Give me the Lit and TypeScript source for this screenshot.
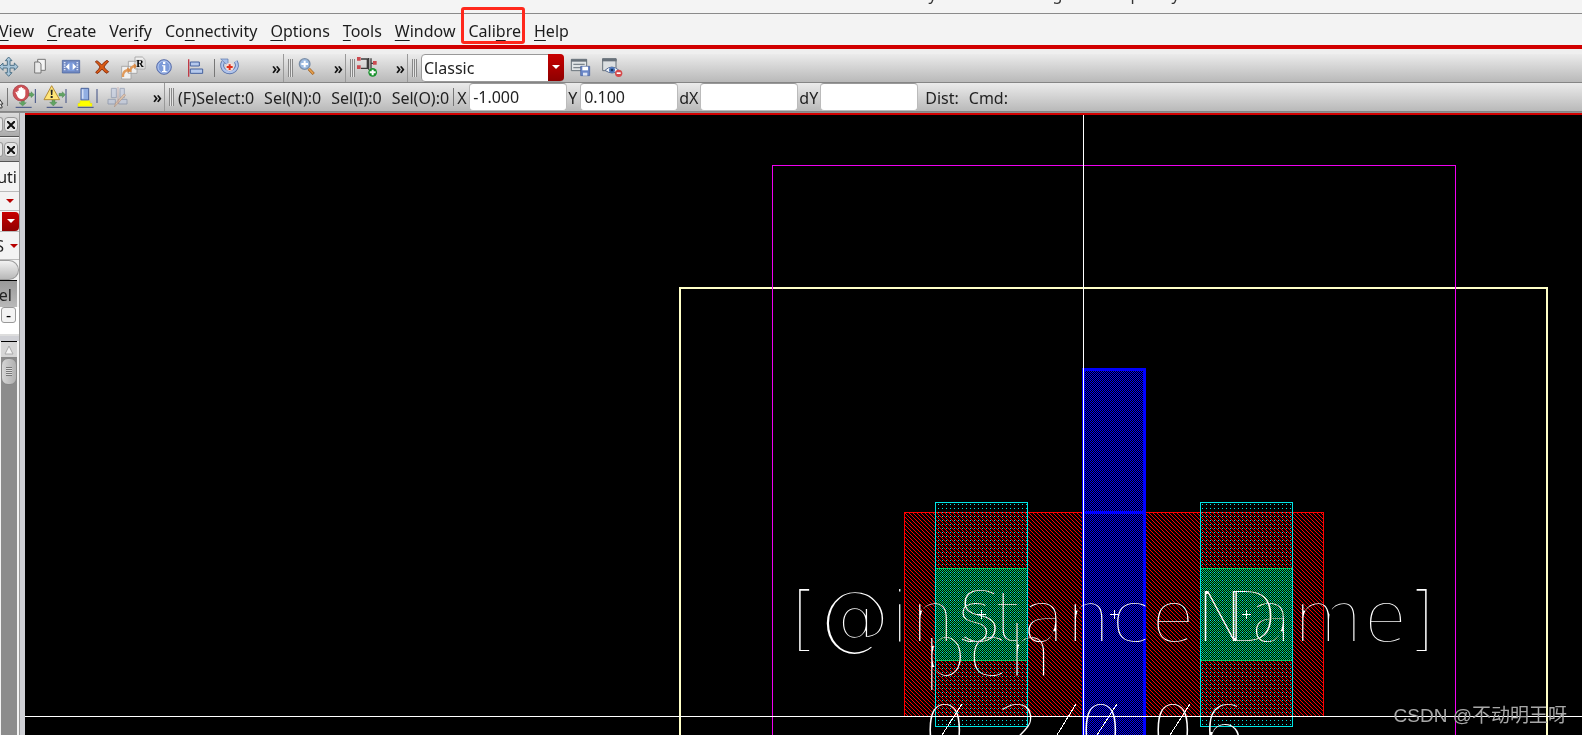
import { LitElement, html, svg, css } from 'lit';
import { customElement, property, state } from 'lit/decorators.js';

type Glyph = { name: string; box: string; art: unknown };

const icons: Record<string, Glyph> = {
  move: {
    name: 'Move', box: '-9 162 72 84',
    art: svg`<path d="M26 171l10 11h-6v14h13v-7l11 11-11 11v-7H30v14h6l-10 11-10-11h6v-14H9v7l-11-11 11-11v7h13v-14h-6z" fill="#a9c6da" stroke="#4f7288" stroke-width="3"/>`,
  },
  copy: {
    name: 'Copy', box: '84 162 72 84',
    art: svg`<path d="M113 178h23v33h-23z" fill="#f4f4f4" stroke="#777" stroke-width="3"/><path d="M104 186h14l5 6v27h-19z" fill="#e9e9e9" stroke="#777" stroke-width="3"/>`,
  },
  stretch: {
    name: 'Stretch', box: '177 162 72 84',
    art: svg`<path d="M187 181h52v38h-52z" fill="#7189c2" stroke="#425d9a" stroke-width="2"/><path d="M194 186v28M232 186v28" stroke="#dbe5f8" stroke-width="5" stroke-dasharray="4 3"/><path d="M202 187h22v26h-22z" fill="#7c9bdb"/><path d="M208 190v20l-11-10zM218 190v20l11-10z" fill="#fff"/>`,
  },
  remove: {
    name: 'Delete', box: '268 162 72 84',
    art: svg`<path d="M288 182q8 4 15 13 8-10 16-14l5 4q-9 7-14 16 5 9 14 14l-5 5q-9-4-15-13-6 9-15 14l-4-5q9-6 13-15-5-9-14-15z" fill="#d95a13" stroke="#7d2306" stroke-width="2.5"/>`,
  },
  replace: {
    name: 'Repeat copy', box: '362 162 72 84',
    art: svg`<path d="M364 199h28v38h-28zM384 184h26v36h-26zM404 171h22l8 8v28h-30z" fill="#f0f0f0" stroke="#a0a0a0" stroke-width="2.5"/><path d="M368 231v-7q3-13 17-14M390 216v-6q3-12 16-12" fill="none" stroke="#e09a5b" stroke-width="7"/><path d="M380 202l12 8-10 9zM400 190l11 8-9 9z" fill="#d98944"/><path d="M408 178h24v26h-24z" fill="#ddd"/><text x="408" y="202" font-size="31" font-weight="700" font-family="Liberation Serif, serif">R</text>`,
  },
  info: {
    name: 'Properties', box: '456 162 72 84',
    art: svg`<circle cx="492" cy="201" r="22" fill="#7d9bd9" stroke="#5c6fa9" stroke-width="3"/><circle cx="492" cy="201" r="18" fill="none" stroke="#b3c7ef" stroke-width="3"/><path d="M489 185h7v7h-7zM486 196h10v17h4v3h-14v-3h4v-14h-4z" fill="#fff"/>`,
  },
  align: {
    name: 'Align', box: '549 162 72 84',
    art: svg`<path d="M566 178v52" stroke="#c13b46" stroke-width="4"/><path d="M571 186h27v12h-27zM571 207h37v13h-37z" fill="#b5c9ed" stroke="#44609d" stroke-width="3"/>`,
  },
  rotate: {
    name: 'Rotate', box: '664 162 72 84',
    art: svg`<path d="M667 186a22 21 0 1 0 38-2" fill="none" stroke="#5872aa" stroke-width="12"/><path d="M667 186a22 21 0 1 0 38-2" fill="none" stroke="#b1c5ec" stroke-width="7"/><path d="M660 177h22v20z" fill="#a9c0eb" stroke="#5872aa" stroke-width="2"/><circle cx="687" cy="201" r="12" fill="#f5dedb"/><path d="M684 193h6v5h6v6h-6v6h-6v-6h-6v-6h6z" fill="#df301c"/>`,
  },
  zoom: {
    name: 'Zoom in', box: '-21 162 72 84',
    art: svg`<path d="M26 206l15 16" stroke="#9a5b1d" stroke-width="9"/><path d="M26 206l14 15" stroke="#e6a04e" stroke-width="5"/><circle cx="14" cy="192" r="16" fill="#9dbce2" stroke="#7b8fa8" stroke-width="4"/><path d="M11 182h6v7h7v6h-7v7h-6v-7H4v-6h7z" fill="#fff"/>`,
  },
  device: {
    name: 'Add device', box: '168 162 72 84',
    art: svg`<path d="M186 177h19v28h-19M209 174v35M216 175v31M216 190h14M205 190h5" fill="none" stroke="#3c3c3c" stroke-width="4"/><path d="M174 171h11v11h-11zM174 196h11v11h-11zM222 183h11v11h-11z" fill="#cc4a50"/><circle cx="221" cy="217" r="13" fill="#17912b"/><path d="M218 209h6v5h6v6h-6v6h-6v-6h-6v-6h6z" fill="#fff"/>`,
  },
  saveView: {
    name: 'Save workspace', box: '804 162 72 84',
    art: svg`<path d="M814 178h46v34h-46z" fill="#e1e4e6" stroke="#68717a" stroke-width="3"/><path d="M813 178h48v7h-48z" fill="#68717a"/><path d="M820 193h34M820 203h24" stroke="#7c858c" stroke-width="4"/><path d="M842 199h27v28h-27z" fill="#6a87c8" stroke="#405b98" stroke-width="2"/><path d="M847 200h17v11h-17z" fill="#fff"/><path d="M849 218h13v9h-13z" fill="#dce4f4"/>`,
  },
  hideView: {
    name: 'Hide workspace', box: '897 162 72 84',
    art: svg`<path d="M908 176h40v36h-40z" fill="#dcdfe1" stroke="#68717a" stroke-width="3"/><path d="M906 176h44v8h-44z" fill="#68717a"/><path d="M915 211q20-20 42 0-20 16-42 0z" fill="#f2f5fa" stroke="#5c6f92" stroke-width="3"/><circle cx="936" cy="210" r="9" fill="#4c77bd"/><circle cx="936" cy="210" r="4" fill="#17355f"/><circle cx="956" cy="220" r="11" fill="#d4494b"/><path d="M950 217h12v5h-12z" fill="#fff"/>`,
  },
  stop: {
    name: 'Stop at level', box: '34 252 78 84',
    art: svg`<path d="M48 325h48" stroke="#3d4d82" stroke-width="3"/><path d="M107 270v42" stroke="#3d4d82" stroke-width="3"/><path d="M86 283h8v-5l10 9-10 9v-5h-8zM65 304h9v7h6l-11 10-11-10h7z" fill="#61a463" stroke="#3b7742"/><circle cx="64" cy="282" r="24" fill="#cc5055" stroke="#a23c45" stroke-width="2"/><path d="M53 276q3-2 4 0v-8q3-3 5 0v-3q3-2 5 0v3q3-2 5 0v4q3-2 5 0v16q-2 12-12 12-9 0-14-13l-4-8q3-2 6 3z" fill="#fff"/>`,
  },
  warn: {
    name: 'Warn at level', box: '127 252 78 84',
    art: svg`<path d="M141 325h48M199 270v42" stroke="#3d4d82" stroke-width="3"/><path d="M178 283h10v-5l9 9-9 9v-5h-10zM157 300h9v10h6l-11 11-11-11h7z" fill="#61a463" stroke="#3b7742"/><path d="M156 260l24 42h-47z" fill="#ffe577" stroke="#b58b32" stroke-width="3" stroke-linejoin="round"/><path d="M153 272h6l-1 16h-4zM153 291h6v6h-6z" fill="#222"/>`,
  },
  marker: {
    name: 'Highlight', box: '220 252 78 84',
    art: svg`<path d="M234 325h48M292 270v42" stroke="#3d4d82" stroke-width="3"/><path d="M244 268h23v35h-23z" fill="#91aee2" stroke="#4b639b" stroke-width="3"/><path d="M249 271v28" stroke="#d2def6" stroke-width="5"/><path d="M241 305h30v8h6v9h-42v-9h6z" fill="#ff0" stroke="#d8d000"/>`,
  },
  edit: {
    name: 'Edit in place', box: '313 252 78 84',
    art: svg`<g opacity=".55"><path d="M335 268h15v28h-15zM361 268h13v28h-13zM325 301h22v14h-22zM357 301h25v14h-25z" fill="#bfcae3" stroke="#71809f" stroke-width="3"/><path d="M378 288l-25 27-9 9 4-12 25-27z" fill="#e8bd90" stroke="#9c6a55" stroke-width="2"/><path d="M355 264v50" stroke="#a66" stroke-width="2"/></g>`,
  },
  pointer: {
    name: 'Select', box: '0 252 12 84',
    art: svg`<path d="M-12 286v38l8-6 6 10 5-3-5-10h7z" fill="#eee" stroke="#333" stroke-width="3"/>`,
  },
};

@customElement('tool-button')
class ToolButton extends LitElement {
  @property() icon = 'move';

  static styles = css`
    :host { display: flex; flex: none; }
    button { display: flex; padding: 0; border: 0; background: none; }
    svg { display: block; height: 28px; overflow: visible; }
  `;

  render() {
    const g = icons[this.icon];
    return html`<button aria-label=${g.name}><svg viewBox=${g.box} aria-hidden="true">${g.art}</svg></button>`;
  }
}

@customElement('menu-bar')
class MenuBar extends LitElement {
  private items: [string, number][] = [
    ['View', 0], ['Create', 0], ['Verify', 3], ['Connectivity', 2], ['Options', 0],
    ['Tools', 0], ['Window', 0], ['Calibre', 4], ['Help', 0],
  ];

  static styles = css`
    nav { display: flex; gap: 13px; height: 31px; margin-left: -1px; background: #f3f3f3; }
    button {
      position: relative; padding: 0; border: 0; background: none; color: #1c1c1c;
      font: 16px/34px "Noto Sans", sans-serif;
    }
    u { text-underline-offset: 3px; text-decoration-thickness: 1px; text-decoration-skip-ink: none; }
    .marked::after {
      content: ""; position: absolute; inset: -7px -4px 1px -7px; border: 3px solid #ff281c; border-radius: 3px;
    }
  `;

  render() {
    return html`<nav>${this.items.map(([label, k]) => html`<button
      class=${label === 'Calibre' ? 'marked' : ''}>${label.slice(0, k)}<u>${label[k]}</u>${label.slice(k + 1)}</button>`)}</nav>`;
  }
}

@customElement('tool-rows')
class ToolRows extends LitElement {
  @state() private x = '-1.000';
  @state() private y = '0.100';

  static styles = css`
    :host { display: block; font: 16px/31px "Noto Sans", sans-serif; color: #222; border-bottom: 1px solid #8e8e8e; }
    .row {
      display: flex; height: 28px; overflow: hidden;
      background: linear-gradient(#ebebeb, #b9b9b9); border-bottom: 1px solid #858585;
    }
    .group { display: flex; flex: none; box-sizing: border-box; border-right: 1px solid #999; }
    .set { display: flex; gap: 7px; }
    .edit { width: 284px; }
    .edit .set { margin-left: -3px; }
    .view, .create { width: 62px; }
    .level { width: 165px; gap: 3px; }
    .level .set { gap: 5px; }
    .fill { flex: 1; border: 0; gap: 4px; }
    .sep { width: 1px; height: 18px; align-self: center; background: #777; flex: none; }
    .more { padding: 0; border: 0; background: none; font: 600 16px/26px "Noto Sans", sans-serif; color: #111; margin-left: auto; margin-right: 2px; }
    .grip { width: 5px; height: 18px; margin-left: 4px; align-self: center; flex: none;
      background: repeating-linear-gradient(90deg, #888 0 1px, #e4e4e4 1px 2px); }
    .combo { position: relative; display: flex; width: 143px; height: 28px; flex: none; }
    select {
      appearance: none; width: 100%; padding: 0 20px 0 2px; border: 1px solid #999; border-radius: 4px;
      background: #fff; color: #222; font: 16px/26px "Noto Sans", sans-serif;
    }
    .drop { position: absolute; right: 0; top: 0; width: 16px; height: 27px; border-radius: 0 4px 4px 0; background: linear-gradient(#c90000, #8d0000); pointer-events: none; }
    .drop::after { content: ""; position: absolute; left: 4px; top: 11px; border: 4px solid transparent; border-top-color: #fff; }
    .status { display: flex; gap: 10px; }
    .coords { display: flex; gap: 1px; }
    .coords .sep { margin-right: 2px; }
    label { display: flex; gap: 2px; line-height: 30px; }
    label input {
      width: 98px; height: 28px; box-sizing: border-box; padding: 0 3px; border: 1px solid #bbb; border-top-color: #999;
      border-radius: 4px; font: 16px/26px "Noto Sans", sans-serif; color: #222; background: #fff;
    }
    label span { min-width: 10px; }
    .tail { display: flex; gap: 10px; padding-left: 3px; }
  `;

  render() {
    const tools = (names: string[]) => names.map((n) => html`<tool-button icon=${n}></tool-button>`);
    const more = html`<button class="more" aria-label="More tools">»</button>`;
    return html`
      <div class="row">
        <div class="group edit">
          <div class="set">${tools(['move', 'copy', 'stretch', 'remove', 'replace', 'info', 'align'])}<span class="sep"></span>${tools(['rotate'])}</div>
          ${more}
        </div>
        <div class="group view"><span class="grip"></span>${tools(['zoom'])}${more}</div>
        <div class="group create"><span class="grip"></span>${tools(['device'])}${more}</div>
        <div class="group fill"><span class="grip"></span>
          <div class="combo"><select aria-label="Workspace"><option>Classic</option></select><span class="drop"></span></div>
          <div class="set">${tools(['saveView', 'hideView'])}</div>
        </div>
      </div>
      <div class="row">
        <div class="group level">${tools(['pointer'])}<span class="sep"></span>
          <div class="set">${tools(['stop', 'warn', 'marker', 'edit'])}</div>${more}</div>
        <div class="group fill"><span class="grip"></span>
          <div class="status"><span>(F)Select:0</span><span>Sel(N):0</span><span>Sel(I):0</span><span>Sel(O):0</span></div>
          <div class="coords">
            <span class="sep"></span>
            <label><span>X</span><input .value=${this.x} /></label>
            <label><span>Y</span><input .value=${this.y} /></label>
            <label><span>dX</span><input /></label>
            <label><span>dY</span><input /></label>
          </div>
          <div class="tail"><span>Dist:</span><span>Cmd:</span></div>
        </div>
      </div>`;
  }
}

@customElement('side-dock')
class SideDock extends LitElement {
  static styles = css`
    :host { display: flex; width: 25px; flex: none; background: #cfd0d5; font: 16px/28px "Noto Sans", sans-serif; color: #222; }
    .pane { display: flex; flex-direction: column; width: 19px; overflow: hidden; background: #f3f3f3; }
    .edge { flex: 1; border-left: 1px solid #999; }
    .title { display: flex; justify-content: flex-end; height: 24px; flex: none; box-sizing: border-box; padding: 4px 1px 3px 0;
      background: linear-gradient(#dcdcdc, #aaa); border-bottom: 1px solid #555; margin-bottom: 1px; }
    .close { width: 14px; height: 15px; flex: none; padding: 0; border: 1px solid #999; border-radius: 4px; background: #e6e6e6;
      display: grid; place-items: center; }
    .close svg { width: 8px; height: 8px; }
    .stub { width: 4px; height: 13px; margin-right: 1px; border: 1px solid #999; border-left: 0; border-radius: 0 4px 4px 0; background: #e6e6e6; }
    .line { flex: none; display: flex; justify-content: flex-end; align-items: center; box-sizing: border-box; border-bottom: 1px solid #bbb; overflow: hidden; }
    .text { height: 29px; padding-right: 2px; line-height: 30px; }
    .drop { height: 19px; }
    .key { height: 21px; }
    .layer { height: 28px; }
    .caret { width: 0; border: 4px solid transparent; border-top-color: #b80000; border-bottom: 0; margin-right: 5px; flex: none; }
    .layer .caret { margin-left: 6px; margin-right: 1px; }
    .red { width: 17px; height: 19px; border-radius: 0 4px 4px 0; background: linear-gradient(#c80000, #900000); display: grid; place-items: center; }
    .red .caret { border-top-color: #fff; margin: 0; }
    .round { height: 20px; flex: none; border: 1px solid #999; border-left: 0; border-radius: 0 10px 10px 0; background: linear-gradient(#f2f2f2, #b8b8b8); box-sizing: border-box; padding: 0; }
    .head { display: flex; justify-content: flex-end; height: 26px; flex: none; border-top: 1px solid #000; background: linear-gradient(#999, #b9b9b9); padding-right: 5px; line-height: 28px; margin-right: 2px; }
    .body { height: 27px; flex: none; background: #fff; border-bottom: 2px solid #ddd; display: flex; align-items: flex-start; }
    .minus { margin-left: 1px; width: 15px; height: 16px; padding: 0; border: 1px solid #999; border-radius: 3px; background: #f3f3f3; font: 16px/12px "Noto Sans", sans-serif; }
    .split { height: 5px; flex: none; background: #cfd0d5; }
    .scroll { flex: 1; margin: 0 2px 0 1px; border-top: 1px solid #000; background: #8c8c8c; }
    .up { display: grid; place-items: center; height: 15px; background: #d6d6d6; border-bottom: 1px solid #888; }
    .up svg { width: 10px; height: 10px; }
    .thumb { height: 27px; box-sizing: border-box; border: 1px solid #888; border-radius: 7px; background: linear-gradient(90deg, #d5d5d5, #b0b0b0); display: grid; place-items: center; }
    .thumb i { width: 6px; height: 9px; background: repeating-linear-gradient(#777 0 1px, #ddd 1px 2px); }
  `;

  render() {
    const title = html`<div class="title"><span class="stub"></span><button class="close" aria-label="Close">
      <svg viewBox="0 0 8 8"><path d="M0 0l8 8M8 0L0 8" stroke="#111" stroke-width="2"/></svg></button></div>`;
    return html`
      <div class="pane">
        ${title}${title}
        <div class="line text">uti</div>
        <div class="line drop"><span class="caret"></span></div>
        <div class="line key"><span class="red"><span class="caret"></span></span></div>
        <div class="line layer">S<span class="caret"></span></div>
        <button class="round" aria-label="Options"></button>
        <div class="head">el</div>
        <div class="body"><button class="minus">-</button></div>
        <div class="split"></div>
        <div class="scroll">
          <div class="up"><svg viewBox="0 0 10 10"><path d="M5 1l4 8H1z" fill="#f5f5f5" stroke="#aaa"/></svg></div>
          <div class="thumb"><i></i></div>
        </div>
      </div>
      <div class="edge"></div>`;
  }
}

@customElement('layout-canvas')
class LayoutCanvas extends LitElement {
  static styles = css`
    :host { display: block; position: relative; flex: 1; min-width: 0; overflow: hidden; background: #000; border-top: 2px solid #d10000; }
    svg { position: absolute; inset: 0; width: 100%; height: 100%; shape-rendering: crispEdges; }
    .label { font: 200 72px "DejaVu Sans", sans-serif; fill: #fff; stroke: #000; stroke-width: 2px; mix-blend-mode: lighten; }
    .credit { position: absolute; right: 15px; bottom: 5px; font: 19px/28px "Liberation Sans", "Noto Sans CJK SC", sans-serif; color: #a8a8a8; }
  `;

  private labels: [number, number, string][] = [
    [790, 642, '[@instanceName]'], [957, 642, 'S'], [1223, 642, 'D'], [922, 676, 'pch'],
    [922, 756, '0.'], [996, 756, '2'], [1078, 756, '0.'], [1150, 756, '0'], [1201, 756, '6'],
  ];

  private contact(x: number) {
    return svg`
      <rect x=${x} y="502" width="93" height="225" fill="url(#dots)"/>
      <rect x=${x} y="568" width="93" height="93" fill="#000"/>
      <rect x=${x} y="568" width="93" height="93" fill="url(#mesh)"/>
      <path d="M${x} 568.5h93M${x} 660.5h93" stroke="#00d070"/>
      <rect x=${x + 0.5} y="502.5" width="92" height="224" fill="none" stroke="#00e5e5"/>`;
  }

  render() {
    return html`
      <svg role="img" aria-label="Transistor layout">
        <defs>
          <pattern id="hatch" width="4" height="4" patternUnits="userSpaceOnUse">
            <path d="M0 0h1v1H0zM1 1h1v1H1zM2 2h1v1H2zM3 3h1v1H3z" fill="#f00"/>
          </pattern>
          <pattern id="dots" width="4" height="4" patternUnits="userSpaceOnUse">
            <path d="M2 0h1v1H2z" fill="#00e5e5"/>
          </pattern>
          <pattern id="mesh" width="4" height="4" patternUnits="userSpaceOnUse">
            <path d="M0 0h1v1H0zM1 1h1v1H1zM3 1h1v1H3zM0 2h1v1H0zM2 2h1v1H2zM1 3h1v1H1zM3 3h1v1H3z" fill="#00cc66"/>
            <path d="M2 0h1v1H2z" fill="#00e5e5"/>
          </pattern>
          <pattern id="poly" width="2" height="2" patternUnits="userSpaceOnUse">
            <path d="M0 0h1v1H0zM1 1h1v1H1z" fill="#00f"/>
          </pattern>
        </defs>
        <g transform="translate(-25 -115)">
          <rect x="904" y="512" width="420" height="205" fill="url(#hatch)"/>
          <rect x="904.5" y="512.5" width="419" height="204" fill="none" stroke="#f00"/>
          ${this.contact(935)}${this.contact(1200)}
          <rect x="1082" y="368" width="64" height="400" fill="#000"/>
          <rect x="1082" y="368" width="64" height="400" fill="url(#poly)"/>
          <path d="M1083.5 800V369.5h61V800M1083 512.5h62" fill="none" stroke="#00f" stroke-width="3"/>
          <rect x="680" y="288" width="867" height="600" fill="none" stroke="#ffffc8" stroke-width="2"/>
          <rect x="772.5" y="165.5" width="683" height="700" fill="none" stroke="#f000f0"/>
          ${this.labels.map(([x, y, s]) => svg`<text class="label" x=${x} y=${y}>${s}</text>`)}
          <g stroke="#fff" fill="none">
            <path d="M942 735l20-31M1057 735l19-31M1097 735l20-31M1170 735l20-31"/>
            <path d="M977 614.5h9M981.5 610v9M1110 614.5h9M1114.5 610v9M1242 614.5h9M1246.5 610v9"/>
            <path d="M1083.5 0v1400M0 716.5h4000"/>
          </g>
        </g>
      </svg>
      <span class="credit">CSDN @不动明王呀</span>`;
  }
}

@customElement('app-root')
class AppRoot extends LitElement {
  static styles = css`
    :host { display: flex; flex-direction: column; height: 100vh; overflow: hidden; background: #efefef; font-family: "Noto Sans", sans-serif; }
    .caption {
      display: grid; grid-template-columns: 124px 78px 41px 10px; justify-content: center; height: 14px; flex: none; box-sizing: border-box;
      padding-left: 528px; overflow: hidden; background: #f4f4f4; border-bottom: 1px solid #8a8a8a;
      color: #333; font-size: 16px; line-height: 22px;
    }
    .caption span { margin-top: -17px; }
    .rule { height: 4px; flex: none; background: #d10000; margin-bottom: 5px; }
    .work { display: flex; flex: 1; min-height: 0; }
  `;

  render() {
    return html`
      <div class="caption"><span>y</span><span>g</span><span>p</span><span>y</span></div>
      <menu-bar></menu-bar>
      <div class="rule"></div>
      <tool-rows></tool-rows>
      <div class="work"><side-dock></side-dock><layout-canvas></layout-canvas></div>`;
  }
}
